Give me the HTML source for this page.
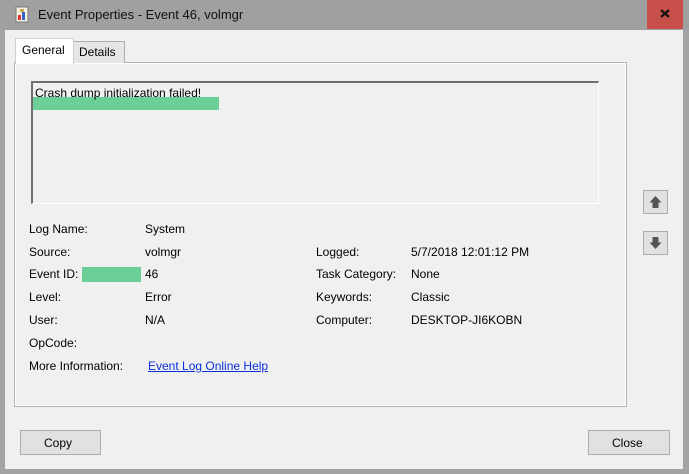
<!DOCTYPE html>
<html><head><style>
*{margin:0;padding:0;box-sizing:border-box}
body{width:689px;height:474px;background:#a3a3a3;font-family:"Liberation Sans",sans-serif;font-size:12px;color:#000;position:relative;overflow:hidden}
.abs{position:absolute}
.t{position:absolute;white-space:nowrap;line-height:14px}
</style></head><body>
<div class="abs" style="left:0;top:0;width:689px;height:30px;background:#a0a0a0"></div>
<svg class="abs" style="left:15px;top:6px" width="14" height="17" viewBox="0 0 14 17"><rect x="1" y="1" width="12" height="15" fill="#f4f0e0" stroke="#777"/><rect x="3" y="9" width="3" height="5" fill="#d33"/><rect x="7" y="6" width="3" height="8" fill="#36c"/><rect x="5" y="3" width="4" height="3" fill="#ca5"/></svg>
<div class="t" style="left:38px;top:8px;font-size:13px;color:#111">Event Properties - Event 46, volmgr</div>
<div class="abs" style="left:647px;top:0;width:36px;height:29px;background:#c7504a"></div>
<svg class="abs" style="left:660px;top:9px" width="10" height="9" viewBox="0 0 10 9"><path d="M1 1L9 8M9 1L1 8" stroke="#111" stroke-width="2.2"/></svg>
<div class="abs" style="left:5px;top:30px;width:678px;height:439px;background:#f0f0f0"></div>
<div class="abs" style="left:14px;top:62px;width:613px;height:345px;border:1px solid #b4b4b4;background:#f0f0f0"><div class="abs" style="left:0;top:0;right:0;bottom:0;border:1px solid #fff"></div></div>
<div class="abs" style="left:73px;top:41px;width:52px;height:22px;border:1px solid #adadad;border-bottom:none;background:#e6e6e6"></div>
<div class="t" style="left:79px;top:45px">Details</div>
<div class="abs" style="left:15px;top:38px;width:59px;height:26px;border:1px solid #d0d0d0;border-bottom:none;background:#fff"></div>
<div class="t" style="left:22px;top:43px">General</div>
<div class="abs" style="left:31px;top:81px;width:568px;height:123px;border-top:2px solid #6e6e6e;border-left:2px solid #6e6e6e;border-right:1px solid #fff;border-bottom:1px solid #fff;background:#f0f0f0"></div>
<div class="abs" style="left:33px;top:97px;width:186px;height:13px;background:#6dcf98"></div>
<div class="t" style="left:35px;top:86px">Crash dump initialization failed!</div>
<div class="t" style="left:29px;top:222px">Log Name:</div><div class="t" style="left:145px;top:222px">System</div>
<div class="t" style="left:29px;top:245px">Source:</div><div class="t" style="left:145px;top:245px">volmgr</div>
<div class="t" style="left:29px;top:267px">Event ID:</div><div class="abs" style="left:82px;top:267px;width:59px;height:15px;background:#6dcf98"></div><div class="t" style="left:145px;top:267px">46</div>
<div class="t" style="left:29px;top:290px">Level:</div><div class="t" style="left:145px;top:290px">Error</div>
<div class="t" style="left:29px;top:313px">User:</div><div class="t" style="left:145px;top:313px">N/A</div>
<div class="t" style="left:29px;top:336px">OpCode:</div>
<div class="t" style="left:29px;top:359px">More Information:</div><div class="t" style="left:148px;top:359px;color:#0b2fd6;text-decoration:underline">Event Log Online Help</div>
<div class="t" style="left:316px;top:245px">Logged:</div><div class="t" style="left:411px;top:245px">5/7/2018 12:01:12 PM</div>
<div class="t" style="left:316px;top:267px">Task Category:</div><div class="t" style="left:411px;top:267px">None</div>
<div class="t" style="left:316px;top:290px">Keywords:</div><div class="t" style="left:411px;top:290px">Classic</div>
<div class="t" style="left:316px;top:313px">Computer:</div><div class="t" style="left:411px;top:313px">DESKTOP-JI6KOBN</div>
<div class="abs" style="left:643px;top:190px;width:25px;height:24px;border:1px solid #adadad;background:#e1e1e1"></div>
<svg class="abs" style="left:648px;top:195px" width="15" height="14" viewBox="0 0 15 14"><path d="M7.5 1L13.5 7.5H10.5V13H4.5V7.5H1.5Z" fill="#555"/></svg>
<div class="abs" style="left:643px;top:231px;width:25px;height:24px;border:1px solid #adadad;background:#e1e1e1"></div>
<svg class="abs" style="left:648px;top:236px" width="15" height="14" viewBox="0 0 15 14"><path d="M7.5 13L13.5 6.5H10.5V1H4.5V6.5H1.5Z" fill="#555"/></svg>
<div class="abs" style="left:20px;top:430px;width:81px;height:25px;border:1px solid #adadad;background:#e1e1e1"></div>
<div class="t" style="left:44px;top:436px">Copy</div>
<div class="abs" style="left:588px;top:430px;width:82px;height:25px;border:1px solid #adadad;background:#e1e1e1"></div>
<div class="t" style="left:612px;top:436px">Close</div>
</body></html>
